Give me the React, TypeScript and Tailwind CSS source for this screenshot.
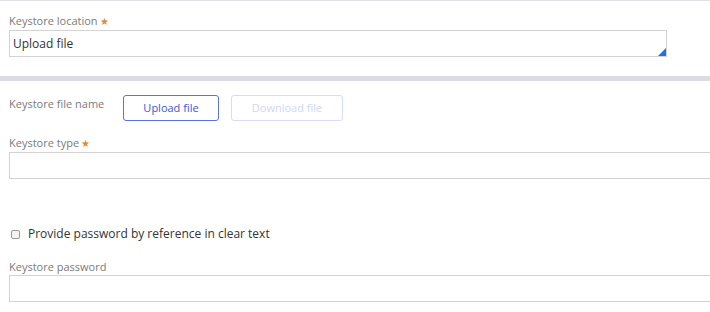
export default function App() {
  return (
    <div className="w-[710px] h-[312px] overflow-hidden bg-white border-t border-[#e2e2e6] font-['Open_Sans',sans-serif] text-[#333]">
      <div className="px-[9px] pt-[13px]">
        <div className="flex items-center h-[15px] text-[11px] text-[#7b7b7b]">
          Keystore location<span className="ml-[2px] text-[10px] text-[#e08a2e]">★</span>
        </div>
        <div className="relative mt-[1px] w-[658px] h-[27px] border border-[#d3d3d3] flex items-center px-[3px] text-[12px] text-[#333]">
          Upload file
          <svg className="absolute right-0 bottom-0" width="8" height="8" viewBox="0 0 8 8">
            <polygon points="8,0 8,8 0,8" fill="#1a73e8" />
          </svg>
        </div>
      </div>

      <div className="mt-[19px] h-[5px] bg-[#dcdde2]" />

      <div className="px-[9px] pt-[14px]">
        <div className="flex items-start">
          <div className="w-[114px] pt-[1px] text-[11px] text-[#7b7b7b]">Keystore file name</div>
          <button className="w-[96px] h-[26px] rounded-[3px] border border-[#5a72e6] text-[11px] text-[#3b57d4] bg-white">
            Upload file
          </button>
          <button className="ml-[12px] w-[112px] h-[26px] rounded-[3px] border border-[#d6dcfb] text-[11px] text-[#cfd6f8] bg-white">
            Download file
          </button>
        </div>

        <div className="mt-[15px] flex items-center h-[15px] text-[11px] text-[#7b7b7b]">
          Keystore type<span className="ml-[2px] text-[10px] text-[#e08a2e]">★</span>
        </div>
        <div className="mt-[1px] w-[720px] h-[27px] border border-[#d3d3d3]" />

        <div className="mt-[48px] flex items-center gap-[8px] h-[14px] text-[12px] text-[#333]">
          <span className="ml-[2px] w-[9px] h-[9px] rounded-[2px] border border-[#9a9a9a] bg-[#f3f3f3]" />
          Provide password by reference in clear text
        </div>

        <div className="mt-[19px] flex items-center h-[15px] text-[11px] text-[#7b7b7b]">Keystore password</div>
        <div className="w-[720px] h-[27px] border border-[#d3d3d3]" />
      </div>
    </div>
  );
}
